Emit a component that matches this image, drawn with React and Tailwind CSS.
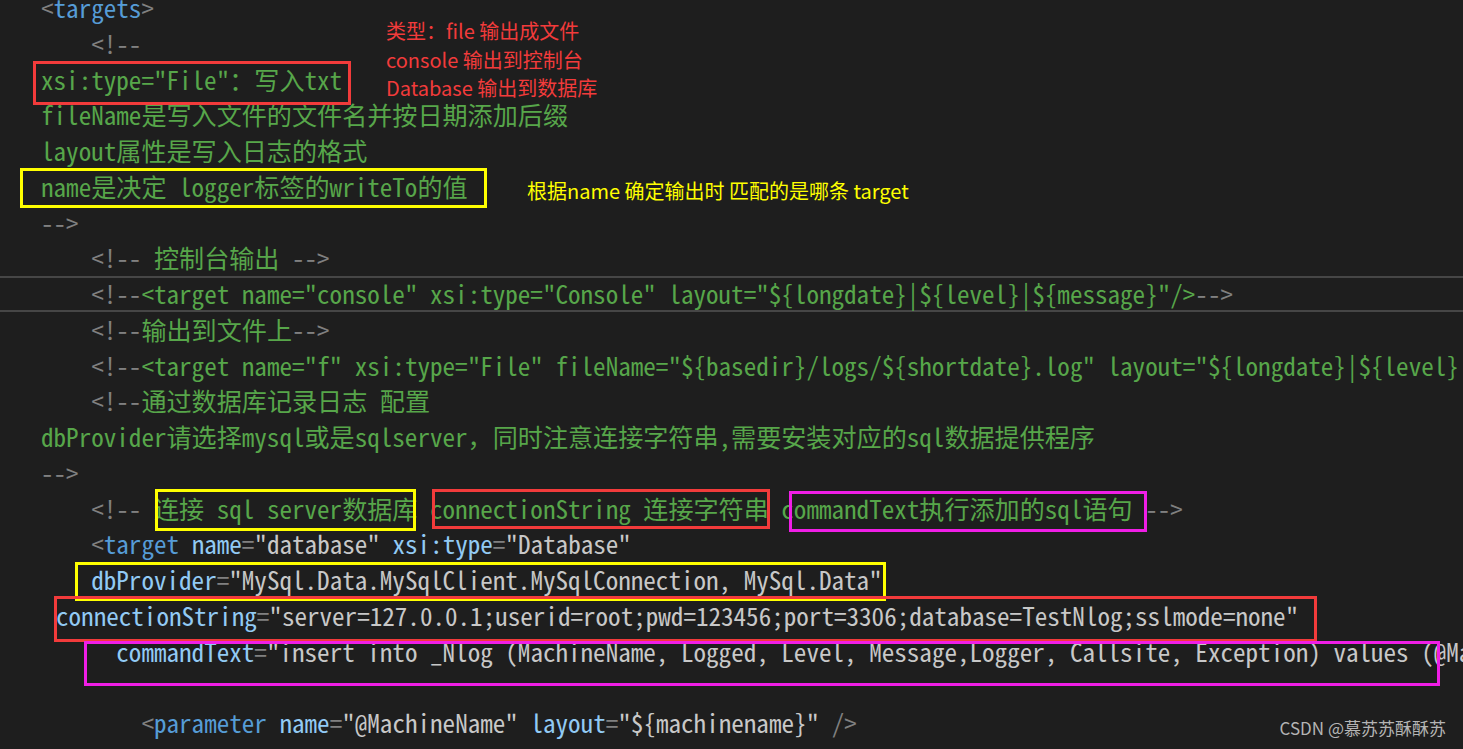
const tone = {
  d: 'text-[#808080]',
  g: 'text-[#57a64a]',
  b: 'text-[#569cd6]',
  a: 'text-[#92caf4]',
  v: 'text-[#c8c8c8]',
  t: '',
};

// [indent, tokens, highlighted]
const lines = [
  ['', [['d', '<'], ['b', 'targets'], ['d', '>']]],
  ['    ', [['d', '<!--']]],
  ['', [['g', 'xsi:type="File"：写入txt']]],
  ['', [['g', 'fileName是写入文件的文件名并按日期添加后缀']]],
  ['', [['g', 'layout属性是写入日志的格式']]],
  ['', [['g', 'name是决定 logger标签的writeTo的值']]],
  ['', [['d', '-->']]],
  ['    ', [['d', '<!-- '], ['g', '控制台输出'], ['d', ' -->']]],
  ['    ', [['d', '<!--'], ['g', '<target name="console" xsi:type="Console" layout="${longdate}|${level}|${message}"/>'], ['d', '-->']], true],
  ['    ', [['d', '<!--'], ['g', '输出到文件上'], ['d', '-->']]],
  ['    ', [['d', '<!--'], ['g', '<target name="f" xsi:type="File" fileName="${basedir}/logs/${shortdate}.log" layout="${longdate}|${level}|${message}"/>'], ['d', '-->']]],
  ['    ', [['d', '<!--'], ['g', '通过数据库记录日志 配置']]],
  ['', [['g', 'dbProvider请选择mysql或是sqlserver，同时注意连接字符串,需要安装对应的sql数据提供程序']]],
  ['', [['d', '-->']]],
  ['    ', [['d', '<!-- '], ['g', '连接 sql server数据库 connectionString 连接字符串 commandText执行添加的sql语句'], ['d', ' -->']]],
  ['    ', [['d', '<'], ['b', 'target'], ['t', ' '], ['a', 'name'], ['d', '='], ['v', '"database"'], ['t', ' '], ['a', 'xsi:type'], ['d', '='], ['v', '"Database"']]],
  ['    ', [['a', 'dbProvider'], ['d', '='], ['v', '"MySql.Data.MySqlClient.MySqlConnection, MySql.Data"']]],
  ['conn', [['a', 'connectionString'], ['d', '='], ['v', '"server=127.0.0.1;userid=root;pwd=123456;port=3306;database=TestNlog;sslmode=none"']]],
  ['      ', [['a', 'commandText'], ['d', '='], ['v', '"insert into _Nlog (MachineName, Logged, Level, Message,Logger, Callsite, Exception) values (@MachineName, @Logged, @Level)"']]],
  ['', []],
  ['        ', [['d', '<'], ['b', 'parameter'], ['t', ' '], ['a', 'name'], ['d', '='], ['v', '"@MachineName"'], ['t', ' '], ['a', 'layout'], ['d', '='], ['v', '"${machinename}"'], ['t', ' '], ['d', '/>']]],
];

const boxes = [
  'left-[33px] top-[61px] w-[318px] h-[44px] border-[#f23b3b]',
  'left-[20px] top-[168px] w-[467px] h-[40px] border-[#ffff00]',
  'left-[155px] top-[489px] w-[261px] h-[42px] border-[#ffff00]',
  'left-[432px] top-[489px] w-[338px] h-[40px] border-[#f23b3b]',
  'left-[789px] top-[491px] w-[358px] h-[41px] border-[#f01ee6]',
  'left-[75px] top-[562px] w-[811px] h-[39px] border-[#ffff00]',
  'left-[54px] top-[596px] w-[1263px] h-[46px] border-[#f23b3b]',
  'left-[84px] top-[641px] w-[1356px] h-[45px] border-[#f01ee6]',
];

export default function App() {
  return (
    <div className="relative w-[1463px] h-[749px] overflow-hidden bg-[#1e1e1e]">
      <div className="-mt-[10px] flex flex-col font-['Noto_Sans_Mono_CJK_SC','Noto_Sans_CJK_SC',monospace] text-[25.1px] whitespace-pre">
        {lines.map(([indent, tokens, hl], i) => (
          <div
            key={i}
            className={
              hl
                ? 'h-[35.75px] leading-[31.75px] pl-[41px] border-y-2 border-[#464646]'
                : 'h-[35.75px] leading-[35.75px] pl-[41px]'
            }
          >
            {indent === 'conn' ? <span className="inline-block w-[15px]" /> : indent}
            {tokens.map(([c, text], j) => (
              <span key={j} className={tone[c]}>
                {text}
              </span>
            ))}
          </div>
        ))}
      </div>

      {boxes.map((b) => (
        <div key={b} className={'absolute border-[3px] ' + b} />
      ))}

      <div className="absolute left-[386px] top-[17px] flex flex-col font-['Noto_Sans_CJK_SC',sans-serif] text-[20px] leading-[28.5px] text-[#f23b3b]">
        <div>类型：file 输出成文件</div>
        <div>console 输出到控制台</div>
        <div>Database 输出到数据库</div>
      </div>

      <div className="absolute left-[527px] top-[177px] font-['Noto_Sans_CJK_SC',sans-serif] text-[20px] leading-[28px] text-[#ffff00]">
        根据name 确定输出时 匹配的是哪条 target
      </div>

      <div className="absolute right-[17px] top-[716px] font-['Noto_Sans_CJK_SC',sans-serif] text-[17px] leading-[24px] text-[#b4b4b4]">
        CSDN @慕苏苏酥酥苏
      </div>
    </div>
  );
}
